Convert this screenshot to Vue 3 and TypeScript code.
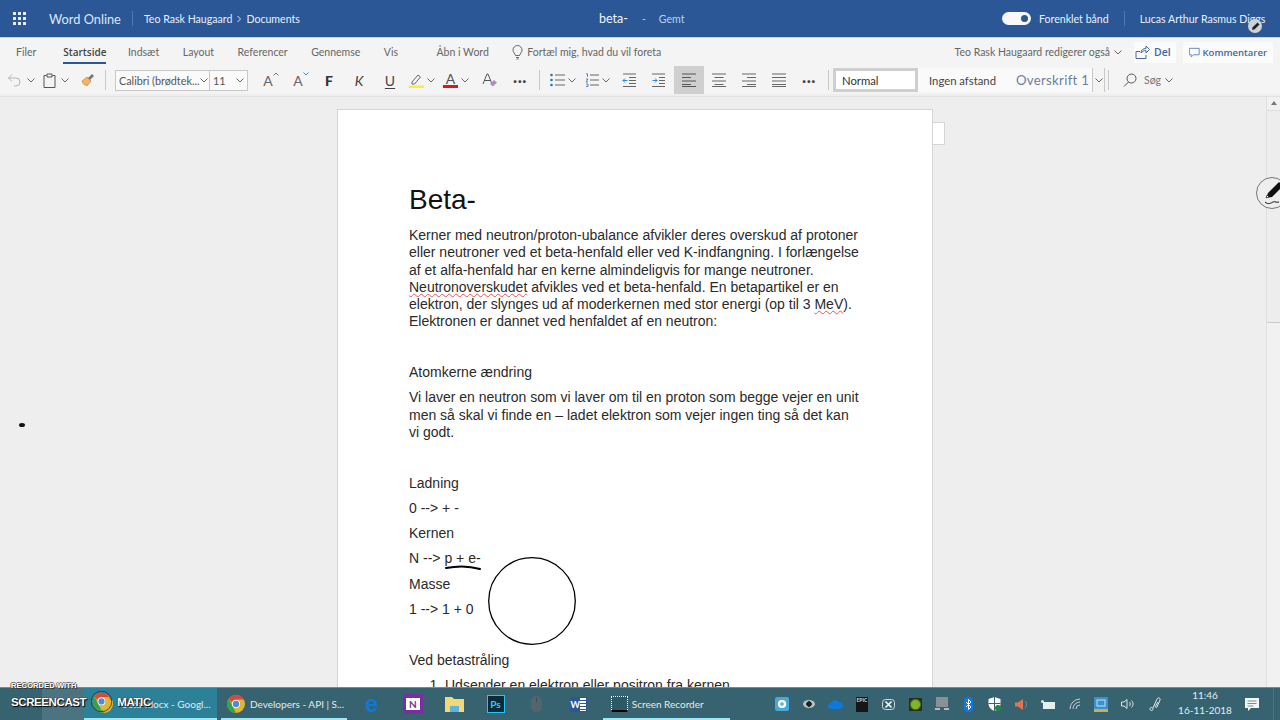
<template>
  <div class="app">
    <header class="titlebar">
      <div class="bar-left">
        <div class="waffle"><i v-for="n in 9" :key="n"></i></div>
        <span class="product">Word Online</span>
        <span class="bar-sep"></span>
        <span class="crumb">Teo Rask Haugaard</span>
        <svg class="crumb-arrow" width="6" height="8" viewBox="0 0 6 8"><path d="M1.5 1l3 3-3 3" fill="none" stroke="#dce6f4" stroke-width="1"/></svg>
        <span class="crumb">Documents</span>
      </div>
      <div class="doc-name">
        <span class="doc-title">beta-</span>
        <span class="doc-dash">-</span>
        <span class="doc-saved">Gemt</span>
      </div>
      <div class="toggle"><i></i></div>
      <span class="crumb toggle-label">Forenklet bånd</span>
      <span class="bar-sep right-sep"></span>
      <span class="crumb user">Lucas Arthur Rasmus Diggs</span>
    </header>

    <nav class="tabs">
      <span class="tab" v-for="tab in tabs" :key="tab" :class="{ active: tab === 'Startside', filer: tab === 'Filer' }">{{ tab }}</span>
      <span class="tab open-word">Åbn i Word</span>
      <svg class="bulb" width="11" height="15" viewBox="0 0 11 15"><path d="M3.500 10.500C3 8.500 1 7.500 1 5a4.500 4.500 0 0 1 9 0c0 2.500-2 3.500-2.500 5.500zM4 12.500h3M4.500 14h2" fill="none" stroke="#666" stroke-width="1"/></svg>
      <span class="tab tell">Fortæl mig, hvad du vil foreta</span>
      <span class="also">Teo Rask Haugaard redigerer også</span>
      <svg class="chev also-chev" width="8" height="5" viewBox="0 0 8 5"><path d="M.5.5l3.500 3.500 3.500-3.500" /></svg>
      <span class="pill share">
        <svg width="15" height="14" viewBox="0 0 15 14"><path d="M5 6.500H1v7h10V10M6 8c0-3 2-4.500 5-4.500V1l3.500 3.500L11 8V5.500C9 5.500 7.500 6 6 8z" fill="none" stroke="#44689f" stroke-width="1"/></svg>
        Del
      </span>
      <span class="pill comments">
        <svg width="14" height="13" viewBox="0 0 14 13"><path d="M.5 1h13v8.500H6L3 12.300V9.500H.5z" fill="none" stroke="#44689f" stroke-width="1"/></svg>
        Kommentarer
      </span>
    </nav>

    <div class="toolbar">
      <button class="tool split first">
        <svg width="15" height="14" viewBox="0 0 15 14"><path d="M5 1.500L1.500 5 5 8.500M1.500 5H9a4 4 0 0 1 0 8H7" fill="none" stroke="#b5b5b5" stroke-width="1"/></svg>
        <svg class="chev" width="8" height="5" viewBox="0 0 8 5"><path d="M.5.5l3.500 3.500 3.500-3.500" /></svg>
      </button>
      <button class="tool split clip">
        <svg width="13" height="15" viewBox="0 0 13 15"><path d="M3.500 2.500H1v12h11v-12H9.500M4 1h5v3H4z" fill="none" stroke="#555" stroke-width="1"/></svg>
        <svg class="chev" width="8" height="5" viewBox="0 0 8 5"><path d="M.5.5l3.500 3.500 3.500-3.500" /></svg>
      </button>
      <button class="tool painter">
        <svg width="14" height="14" viewBox="0 0 14 14"><path d="M1 8l5-4 4 4-4 5c-1-1-1.500-1-3-1.500C2 10.500 1.500 9.500 1 8z" fill="#f0b56c" stroke="#d58a32" stroke-width=".8"/><path d="M7 5l4-4 2 2-4 4z" fill="#777"/></svg>
      </button>
      <span class="sep sep-a"></span>

      <div class="font-box">
        <span class="font-name">Calibri (brødtek...</span>
        <svg class="chev" width="8" height="5" viewBox="0 0 8 5"><path d="M.5.5l3.500 3.500 3.500-3.500" /></svg>
      </div>
      <div class="font-box size-box">
        <span class="font-name">11</span>
        <svg class="chev" width="8" height="5" viewBox="0 0 8 5"><path d="M.5.5l3.500 3.500 3.500-3.500" /></svg>
      </div>

      <button class="tool sizer"><span class="a">A</span><svg class="caret" width="6" height="4" viewBox="0 0 6 4"><path d="M.5 3.500L3 1l2.500 2.500" /></svg></button>
      <button class="tool sizer"><span class="a">A</span><svg class="caret" width="6" height="4" viewBox="0 0 6 4"><path d="M.5.5L3 3 5.500.5" stroke="#4a8bd0"/></svg></button>
      <button class="tool bold">F</button>
      <button class="tool italic">K</button>
      <button class="tool under">U</button>
      <button class="tool split wide">
        <svg width="15" height="15" viewBox="0 0 15 15"><path d="M3 9l6-7 2.500 2-6 7H3z" fill="none" stroke="#666"/><rect y="12.500" width="15" height="2.500" fill="#fcec3a"/></svg>
        <svg class="chev" width="8" height="5" viewBox="0 0 8 5"><path d="M.5.5l3.500 3.500 3.500-3.500" /></svg>
      </button>
      <button class="tool split wide">
        <span class="font-color">A</span>
        <svg class="chev" width="8" height="5" viewBox="0 0 8 5"><path d="M.5.5l3.500 3.500 3.500-3.500" /></svg>
      </button>
      <button class="tool clear">
        <svg width="16" height="15" viewBox="0 0 16 15"><path d="M1 11L5 1h1l4 10M2.500 7.500h6" fill="none" stroke="#555"/><path d="M8 11l4-4 3 2.500-4 4z" fill="#b58ac9"/></svg>
      </button>
      <button class="tool dots">···</button>
      <span class="sep sep-b"></span>

      <button class="tool split list">
        <svg width="15" height="14" viewBox="0 0 15 14"><g fill="#2a6fb5"><circle cx="1.500" cy="2" r="1.300"/><circle cx="1.500" cy="7" r="1.300"/><circle cx="1.500" cy="12" r="1.300"/></g><path d="M5 2h10M5 7h10M5 12h10" stroke="#666"/></svg>
        <svg class="chev" width="8" height="5" viewBox="0 0 8 5"><path d="M.5.5l3.500 3.500 3.500-3.500" /></svg>
      </button>
      <button class="tool split list">
        <svg width="14" height="14" viewBox="0 0 14 14"><path d="M1 .8h1.500v3M1 6h2L1 9h2M1 11h2v2.500H1" fill="none" stroke="#2a6fb5" stroke-width=".8"/><path d="M5 2h9M5 7h9M5 12h9" stroke="#666"/></svg>
        <svg class="chev" width="8" height="5" viewBox="0 0 8 5"><path d="M.5.5l3.500 3.500 3.500-3.500" /></svg>
      </button>
      <button class="tool">
        <svg width="14" height="14" viewBox="0 0 14 14"><path d="M1 1h13M7 4.500h7M7 7.500h7M7 10.500h7M1 13.500h13" stroke="#666"/><path d="M5.500 7.500H.8M3 5.500l-2 2 2 2" fill="none" stroke="#2a8ad4"/></svg>
      </button>
      <button class="tool">
        <svg width="14" height="14" viewBox="0 0 14 14"><path d="M0 1h13M7 4.500h6M7 7.500h6M7 10.500h6M0 13.500h13" stroke="#666"/><path d="M.5 7.500h4.700M3 5.500l2 2-2 2" fill="none" stroke="#2a8ad4"/></svg>
      </button>
      <button class="tool active-align">
        <svg width="14" height="14" viewBox="0 0 14 14"><path d="M0 1h14M0 4.500h9M0 8h14M0 11.500h9M0 13.500h14" stroke="#555"/></svg>
      </button>
      <button class="tool">
        <svg width="14" height="14" viewBox="0 0 14 14"><path d="M0 1h14M2.500 4.500h9M0 8h14M2.500 11.500h9M0 13.500h14" stroke="#666"/></svg>
      </button>
      <button class="tool">
        <svg width="14" height="14" viewBox="0 0 14 14"><path d="M0 1h14M5 4.500h9M0 8h14M5 11.500h9M0 13.500h14" stroke="#666"/></svg>
      </button>
      <button class="tool">
        <svg width="14" height="14" viewBox="0 0 14 14"><path d="M0 1h14M0 4.500h14M0 8h14M0 11.500h14M0 13.500h14" stroke="#666"/></svg>
      </button>
      <button class="tool dots">···</button>
      <span class="sep sep-c"></span>

      <div class="gallery">
        <span class="style-normal">Normal</span>
        <span class="style-tight">Ingen afstand</span>
        <span class="style-head">Overskrift 1</span>
        <span class="gallery-more">
          <svg class="chev" width="8" height="5" viewBox="0 0 8 5"><path d="M.5.5l3.500 3.500 3.500-3.500" /></svg>
        </span>
      </div>
      <span class="sep sep-d"></span>
      <svg class="search-icon" width="14" height="14" viewBox="0 0 14 14"><circle cx="8.500" cy="5.500" r="4.500" fill="none" stroke="#555"/><path d="M5.500 9L1 13.500" stroke="#555"/></svg>
      <span class="search-label">Søg</span>
      <svg class="chev" width="8" height="5" viewBox="0 0 8 5"><path d="M.5.5l3.500 3.500 3.500-3.500" /></svg>
    </div>

    <main class="workspace">
      <div class="canvas">
        <article class="page">
          <h1>Beta-</h1>
          <p>Kerner med neutron/proton-ubalance afvikler deres overskud af protoner eller neutroner ved et beta-henfald eller ved K-indfangning. I forlængelse af et alfa-henfald har en kerne almindeligvis for mange neutroner. <span class="typo">Neutronoverskudet</span> afvikles ved et beta-henfald. En betapartikel er en elektron, der slynges ud af moderkernen med stor energi (op til 3 <span class="typo">MeV</span>). Elektronen er dannet ved henfaldet af en neutron:</p>
          <p class="blank"></p>
          <p>Atomkerne ændring</p>
          <p>Vi laver en neutron som vi laver om til en proton som begge vejer en unit men så skal vi finde en – ladet elektron som vejer ingen ting så det kan vi godt.</p>
          <p class="blank"></p>
          <p>Ladning</p>
          <p>0 --&gt; + -</p>
          <p>Kernen</p>
          <p>N --&gt; p + e-</p>
          <p>Masse</p>
          <p>1 --&gt; 1 + 0</p>
          <p class="blank"></p>
          <p>Ved betastråling</p>
          <ol><li>Udsender en elektron eller positron fra kernen</li></ol>

          <svg class="ink" width="140" height="100" viewBox="0 0 140 100">
            <path d="M1 11c10-2 24-2 34 1" fill="none" stroke="#000" stroke-width="2" stroke-linecap="round"/>
            <circle cx="87" cy="44" r="43.300" fill="none" stroke="#000" stroke-width="1.300"/>
          </svg>
        </article>
        <span class="comment-tab"></span>
      </div>
      <aside class="scrollbar">
        <span class="scroll-up"></span>
        <span class="scroll-thumb"></span>
      </aside>
      <span class="ink-dot"></span>
      <span class="pen-tool">
        <svg width="30" height="30" viewBox="0 0 30 30"><path d="M9 20l2-5L22 4l4 4-11 11z" fill="#111"/><path d="M9 20l3-1-2-2z" fill="#fff" stroke="#111" stroke-width=".6"/><path d="M8 24c3 3 6 1 8 0s4 1 6 0" fill="none" stroke="#111"/></svg>
      </span>
    </main>

    <footer class="taskbar">
      <span class="win-slot"></span>
      <span class="skype-slot"></span>
      <div class="task open lit">
        <svg class="chrome" width="18" height="18" viewBox="0 0 18 18"><use href="#chrome-mark"/></svg>
        <span>beta-.docx - Googl...</span>
      </div>
      <div class="task open second">
        <svg class="chrome" width="18" height="18" viewBox="0 0 18 18">
          <g id="chrome-mark">
            <circle cx="9" cy="9" r="9" fill="#e3b52c"/>
            <path d="M9 0a9 9 0 0 1 7.800 4.500H9a4.500 4.500 0 0 0-4.200 3L1.700 3.700A9 9 0 0 1 9 0z" fill="#d9483b"/>
            <path d="M1.700 3.700L5.500 11 9 18A9 9 0 0 1 1.700 3.700z" fill="#35a24f"/>
            <circle cx="9" cy="9" r="4" fill="#fff"/>
            <circle cx="9" cy="9" r="3.200" fill="#4a8be8"/>
          </g>
        </svg>
        <span>Developers - API | S...</span>
      </div>
      <div class="pins">
        <span class="pin edge">e</span>
        <span class="pin onenote"><b>N</b></span>
        <svg width="19" height="16" viewBox="0 0 19 16"><path d="M0 1h7l2 2h10v13H0z" fill="#f6d776"/><rect x="5" y="10" width="9" height="6" fill="#5cb5dc"/></svg>
        <span class="pin ps">Ps</span>
        <svg width="11" height="16" viewBox="0 0 11 16"><rect width="11" height="16" rx="5" fill="#52656b"/><path d="M5.500 1v5" stroke="#37545d"/></svg>
        <span class="pin word"><b>W</b><i></i></span>
      </div>
      <div class="task open recorder">
        <span class="marquee"></span>
        <span>Screen Recorder</span>
      </div>
      <div class="tray">
        <span class="t-disc"></span>
        <span class="t-eye"></span>
        <svg width="15" height="9" viewBox="0 0 15 9"><path d="M3 9a3 3 0 0 1 0-6 4.500 4.500 0 0 1 8-1 3.500 3.500 0 0 1 1 7z" fill="#0f78d4"/></svg>
        <span class="t-epic">EPIC</span>
        <svg width="13" height="11" viewBox="0 0 13 11"><rect x=".5" y=".5" width="12" height="10" rx="3" fill="none" stroke="#cfd8da"/><path d="M3.500 2.500l6 6M9.500 2.500l-6 6" stroke="#fff" stroke-width="1.500"/></svg>
        <span class="t-nvidia"></span>
        <svg width="14" height="14" viewBox="0 0 14 14"><rect x="1" y="0" width="12" height="10" fill="#8b8f98"/><path d="M0 12h5M9 12h5" stroke="#ddd" stroke-width="1.500"/></svg>
        <span class="t-bt">
          <svg width="7" height="11" viewBox="0 0 7 11"><path d="M1 3l5 5-2.500 2.500v-10L6 3 1 8" fill="none" stroke="#fff"/></svg>
        </span>
        <svg width="13" height="14" viewBox="0 0 13 14"><path d="M6.500 0l6 2v5c0 3-3 6-6 7-3-1-6-4-6-7V2z" fill="#fff"/><path d="M6.500 0v14M.5 6.500h12" stroke="#37626f"/><circle cx="10" cy="11" r="3" fill="#1f8a3b"/></svg>
        <svg width="13" height="13" viewBox="0 0 13 13"><path d="M0 4.500h3L8 1v11L3 8.500H0z" fill="#e0764f"/><path d="M10 3c2 2 2 5 0 7" fill="none" stroke="#7f9097"/></svg>
        <svg width="14" height="9" viewBox="0 0 14 9"><rect x="2" y="2" width="12" height="7" fill="#e8eeee"/><circle cx="1.500" cy="1.500" r="1.500" fill="#dfe8e8"/></svg>
        <svg width="12" height="12" viewBox="0 0 12 12"><path d="M1 11a10 10 0 0 1 10-10M4 11a7 7 0 0 1 7-7M7 11a4 4 0 0 1 4-4" fill="none" stroke="#c5d0d3"/></svg>
        <svg width="14" height="15" viewBox="0 0 14 15"><rect width="14" height="15" rx="1" fill="#3f8fc9"/><rect x="3" y="3" width="8" height="6" fill="none" stroke="#bfe3f5"/><path d="M0 12h14v3H0z" fill="#c9b04a"/></svg>
        <svg width="14" height="12" viewBox="0 0 14 12"><path d="M.5 4h2.500L6 1.500v9L3 8H.5zM8.500 4c1 1 1 3 0 4M10.500 2.500c2 2 2 5 0 7" fill="none" stroke="#dfe7e8"/></svg>
        <svg class="t-pen" width="14" height="14" viewBox="0 0 14 14"><path d="M1 12c0-2 3-2 3 0s-3 2-3 0zM4 11l4-9c1-2 4-1 3 1l-3 7c-1 1-2 0-1.500-1L9 5" fill="none" stroke="#e3e9ea"/></svg>
      </div>
      <div class="clock"><span>11:46</span><span>16-11-2018</span></div>
      <svg class="notify" width="14" height="13" viewBox="0 0 14 13"><path d="M0 0h14v10H6l-3 3v-3H0z" fill="#f4f6f6"/><path d="M2.500 3h9M2.500 5.500h9M2.500 8h6" stroke="#7a8d92"/></svg>
      <span class="show-desktop"></span>
    </footer>

    <div class="watermark">
      <span class="wm-top">RECORDED WITH</span>
      <div class="wm-main">
        <span>SCREENCAST</span>
        <svg width="21" height="21" viewBox="0 0 18 18"><circle cx="9" cy="9" r="8.800" fill="none" stroke="#1b3b47" stroke-width=".7"/><use href="#chrome-mark" transform="translate(1.500 1.500) scale(.83)"/></svg>
        <span>MATIC</span>
      </div>
    </div>

    <span class="cursor">
      <svg width="11" height="11" viewBox="0 0 11 11"><path d="M2 9l.7-2.700L7.500 1.500 9.500 3.500 4.700 8.300z" fill="#222"/></svg>
    </span>
  </div>
</template>

<script setup lang="ts">
const tabs: string[] = ['Filer', 'Startside', 'Indsæt', 'Layout', 'Referencer', 'Gennemse', 'Vis']
</script>

<style>
html,
body {
  margin: 0;
  overflow: hidden;
}
</style>

<style scoped>
.app {
  position: relative;
  display: flex;
  flex-direction: column;
  width: 1280px;
  height: 720px;
  overflow: hidden;
  background: #eeeeee;
  font-family: Lato, "Open Sans", sans-serif;
  color: #444;
}

/* title bar */
.titlebar {
  display: flex;
  align-items: center;
  flex: 0 0 37px;
  padding-left: 13px;
  background: #2b5797;
  color: #fff;
  font-size: 10.600px;
}
.bar-left {
  display: flex;
  align-items: center;
  flex: 0 0 586px;
}
.waffle {
  display: grid;
  grid-template-columns: repeat(3, 3px);
  gap: 2px;
  width: 13px;
  margin-right: 23px;
}
.waffle i {
  width: 3px;
  height: 3px;
  background: #e9eff8;
}
.product {
  font-size: 12.800px;
  color: #dbe7f7;
}
.bar-sep {
  width: 1px;
  height: 15px;
  margin: 0 11px;
  background: #5277ad;
}
.crumb {
  color: #eaf0f9;
  white-space: nowrap;
}
.crumb-arrow {
  margin: 0 4px;
}
.doc-name {
  display: flex;
  align-items: center;
  flex: 0 0 403px;
}
.doc-title {
  font-size: 12.500px;
  color: #f1f5fb;
}
.doc-dash {
  margin: 0 13px 0 14px;
  color: #b9cde9;
}
.doc-saved {
  color: #b9d2f0;
}
.toggle {
  display: flex;
  align-items: center;
  justify-content: flex-end;
  width: 29px;
  height: 13px;
  padding-right: 3px;
  box-sizing: border-box;
  border-radius: 7px;
  background: #f6f8fb;
}
.toggle i {
  width: 7px;
  height: 7px;
  border-radius: 50%;
  background: #2b5797;
}
.toggle-label {
  margin-left: 8px;
}
.right-sep {
  margin: 0 15px 0 15px;
}

/* tabs */
.tabs {
  display: flex;
  align-items: center;
  flex: 0 0 29px;
  padding-left: 16px;
  border-top: 1px solid #c4d3e8;
  box-sizing: border-box;
  background: #f4f4f4;
  font-size: 10.500px;
  color: #666;
}
.tab {
  position: relative;
  margin-right: 23.500px;
  white-space: nowrap;
}
.tab.filer {
  margin-right: 27px;
}
.tab.active {
  margin-right: 21.500px;
  color: #444;
  font-family: "Open Sans", sans-serif;
  font-size: 10px;
  font-weight: 600;
}
.tab.active::after {
  content: "";
  position: absolute;
  left: 0;
  right: 0;
  bottom: -5px;
  height: 2px;
  background: #2b5797;
}
.open-word {
  margin-left: 15px;
}
.bulb {
  margin-right: 4px;
}
.tell {
  margin-right: 0;
}
.also {
  margin-left: auto;
  white-space: nowrap;
}
.also-chev {
  margin: 0 12px 0 4px;
}
.pill {
  display: flex;
  align-items: center;
  gap: 3px;
  height: 21px;
  padding: 0 6px;
  box-sizing: border-box;
  background: #fbfbfb;
  color: #44689f;
  font-family: "Open Sans", sans-serif;
  font-weight: 600;
  font-size: 9.500px;
}
.share {
  gap: 4px;
  width: 42px;
  padding: 0 0 0 1px;
  font-size: 10.500px;
}
.comments {
  width: 90px;
  margin: 0 7px 0 7px;
}

/* ribbon toolbar */
.toolbar {
  display: flex;
  align-items: center;
  flex: 0 0 28px;
  margin-bottom: 2px;
  background: #f4f4f4;
}
.tool {
  display: flex;
  align-items: center;
  justify-content: center;
  flex: 0 0 30px;
  height: 28px;
  padding: 0;
  border: 0;
  background: none;
  font-family: inherit;
  color: #444;
}
.chev {
  fill: none;
  stroke: #666;
  stroke-width: 1;
  flex: none;
}
.split {
  gap: 5px;
}
.first {
  flex: 0 0 33px;
  margin-left: 4px;
}
.clip {
  flex: 0 0 25px;
  margin-left: 6px;
}
.painter {
  flex: 0 0 14px;
  margin-left: 12px;
}
.sep {
  flex: none;
  width: 1px;
  height: 20px;
  background: #c8c8c8;
}
.sep-a {
  margin: 0 9px 0 10px;
}
.sep-b {
  margin: 0 6px 0 4px;
}
.sep-c {
  margin: 0 4px;
}
.sep-d {
  margin: 0 14px 0 3px;
}
.font-box {
  display: flex;
  align-items: center;
  justify-content: space-between;
  box-sizing: border-box;
  width: 95px;
  height: 21px;
  padding: 0 3px;
  border: 1px solid #c8c8c8;
  background: #fafafa;
  font-size: 10.800px;
  color: #555;
  white-space: nowrap;
}
.size-box {
  width: 39px;
  margin-left: -1px;
  margin-right: 8px;
}
.sizer {
  align-items: flex-start;
  padding-top: 7px;
  box-sizing: border-box;
  color: #666;
}
.sizer .a {
  font-size: 14px;
  line-height: 15px;
}
.caret {
  fill: none;
  stroke: #777;
  margin-top: -1px;
}
.bold {
  margin-left: -2px;
  font-weight: 900;
  font-size: 14px;
  color: #333;
}
.italic {
  font-style: italic;
  font-size: 14px;
}
.under {
  margin-left: 1px;
  font-size: 14px;
  text-decoration: underline;
  text-underline-offset: 2px;
}
.wide {
  flex: 0 0 34px;
  gap: 3px;
}
.font-color {
  display: block;
  width: 15px;
  height: 13px;
  border-bottom: 3px solid #e3131b;
  box-sizing: content-box;
  font-size: 14px;
  line-height: 14px;
  text-align: center;
  color: #555;
}
.clear {
  margin-left: 2px;
}
.dots {
  font-size: 15px;
  font-weight: 700;
  letter-spacing: 0.5px;
  color: #444;
}
.list {
  flex: 0 0 34px;
  gap: 3px;
}
.active-align {
  background: #cfcfcf;
}
.gallery {
  display: flex;
  align-items: center;
  flex: 0 0 272px;
  height: 24px;
  box-sizing: border-box;
  background: #fafafa;
  color: #444;
  white-space: nowrap;
}
.style-normal {
  display: flex;
  align-items: center;
  flex: 0 0 85px;
  box-sizing: border-box;
  height: 24px;
  padding-left: 6px;
  border: 3px solid #cfcfcf;
  background: #fff;
  color: #333;
  font-size: 11.300px;
}
.style-tight {
  margin-left: 11px;
  font-size: 11.300px;
}
.style-head {
  margin-left: 20px;
  font-size: 13.200px;
  letter-spacing: 0.3px;
  color: #6d7f9e;
}
.gallery-more {
  display: flex;
  align-items: center;
  justify-content: center;
  margin-left: auto;
  width: 11px;
  height: 24px;
  border-left: 1px solid #c8c8c8;
  border-right: 1px solid #c8c8c8;
  background: #f4f4f4;
}
.search-icon {
  margin-right: 7px;
  flex: none;
}
.search-label {
  margin-right: 4px;
  font-size: 10.500px;
  color: #777;
}

/* document */
.workspace {
  position: relative;
  display: flex;
  flex: 1;
  min-height: 0;
  overflow: hidden;
  border-top: 1px solid #e2e2e2;
  background: #eeeeee;
}
.canvas {
  position: relative;
  flex: 1;
  padding: 13px 0 0 337px;
}
.page {
  position: relative;
  box-sizing: border-box;
  width: 596px;
  height: 640px;
  padding: 71px 71px 0;
  border: 1px solid #d5d5d5;
  border-width: 0 1px;
  box-shadow: 0 -1px 0 #d5d5d5;
  background: #fff;
  font-family: "Liberation Sans", Arial, sans-serif;
  font-size: 14px;
  line-height: 17.300px;
  color: #2a2a2a;
}
h1 {
  margin: 0 0 8px;
  font-size: 28px;
  font-weight: 400;
  line-height: 38px;
  color: #111;
}
p {
  margin: 0 0 8px;
}
.blank {
  height: 17.300px;
}
.typo {
  text-decoration: underline wavy #e0574f 1px;
  text-underline-offset: 1px;
}
ol {
  margin: 0;
  padding-left: 36px;
}
.ink {
  position: absolute;
  left: 107px;
  top: 447px;
}
.comment-tab {
  position: absolute;
  left: 933px;
  top: 25px;
  width: 12px;
  height: 23px;
  box-sizing: border-box;
  border: 1px solid #d5d5d5;
  border-left: 0;
  background: #fff;
}
.scrollbar {
  position: relative;
  flex: 0 0 13px;
  border-left: 1px solid #e0e0e0;
  background: #f1f1f1;
}
.scroll-up {
  display: block;
  height: 13px;
}
.scroll-up::before {
  content: "";
  display: block;
  width: 0;
  margin: 0 auto;
  transform: translateY(4px);
  border: 3px solid transparent;
  border-bottom: 4px solid #777;
  border-top: 0;
}
.scroll-thumb {
  display: block;
  height: 211px;
  border-top: 1px solid #dcdcdc;
  border-bottom: 1px solid #c9c9c9;
  background: #ededed;
}
.ink-dot {
  position: absolute;
  left: 19px;
  top: 326px;
  width: 6px;
  height: 4px;
  border-radius: 50%;
  background: #111;
}
.pen-tool {
  position: absolute;
  left: 1256px;
  top: 80px;
  display: flex;
  align-items: center;
  justify-content: flex-start;
  width: 32px;
  height: 32px;
  box-sizing: border-box;
  border: 1px solid #777;
  border-radius: 50%;
  background: #eee;
}

/* taskbar */
.taskbar {
  position: relative;
  display: flex;
  align-items: center;
  flex: 0 0 33px;
  height: 33px;
  border-top: 1px solid #6c8c96;
  box-sizing: border-box;
  background: #37626f;
  color: #e3ecef;
  font-size: 10px;
}
.win-slot {
  flex: 0 0 42px;
  height: 100%;
}
.skype-slot {
  flex: 0 0 42px;
  height: 100%;
  background: #4b7480;
}
.task {
  position: relative;
  display: flex;
  align-items: center;
  gap: 5px;
  height: 100%;
  min-width: 0;
  white-space: nowrap;
}
.task.open::after {
  content: "";
  position: absolute;
  left: 0;
  right: 0;
  bottom: 0;
  height: 2px;
  background: #9be8f6;
}
.lit {
  flex: 0 0 133px;
  box-sizing: border-box;
  padding-left: 11px;
  background: #2c8098;
}
.lit span {
  margin-left: 4px;
}
.second {
  flex: 0 0 126px;
  margin-left: 4px;
  box-sizing: border-box;
  padding-left: 6px;
}
.pins {
  display: grid;
  grid-auto-flow: column;
  grid-auto-columns: 41.300px;
  align-items: center;
  justify-items: center;
  margin-left: 4px;
}
.pin {
  display: flex;
  align-items: center;
  justify-content: center;
  flex: none;
}
.edge {
  width: 18px;
  font: 700 24px/20px "Liberation Sans", sans-serif;
  color: #0f78d4;
}
.onenote {
  width: 20px;
  height: 20px;
  background: #7a2f9e;
  color: #fff;
  font-size: 10px;
}
.onenote b {
  display: block;
  padding: 0 3px;
  background: #fff;
  color: #7a2f9e;
  line-height: 12px;
}
.ps {
  width: 18px;
  height: 18px;
  border: 1px solid #25c4f5;
  box-sizing: border-box;
  background: #082c3c;
  color: #4ac4f0;
  font-size: 10px;
  font-weight: 700;
}
.word {
  width: 17px;
  height: 15px;
  color: #fff;
  font-size: 9px;
  background: #2b5797;
}
.word i {
  width: 6px;
  height: 13px;
  background: repeating-linear-gradient(#fff 0 2px, #2b5797 2px 3px);
}
.recorder {
  flex: 0 0 127px;
  box-sizing: border-box;
  margin-left: 4px;
  padding-left: 8px;
  gap: 4px;
}
.marquee {
  width: 15px;
  height: 13px;
  border: 1px dotted #fff;
  border-bottom: 2px solid #000;
  background: #2d5866;
}
.tray {
  display: grid;
  grid-auto-flow: column;
  grid-auto-columns: 26.600px;
  align-items: center;
  justify-items: center;
  margin-left: 39px;
}
.t-pen {
  margin-left: 4px;
}
.t-disc {
  width: 14px;
  height: 14px;
  border-radius: 2px;
  background: radial-gradient(circle, #5ab8de 0 1.500px, #fff 2px 4px, #4aa8d4 4.500px);
}
.t-eye {
  width: 12px;
  height: 8px;
  border-radius: 50%;
  background: radial-gradient(circle, #222 0 2.500px, #b9c3c5 3px);
}
.t-epic {
  display: flex;
  justify-content: center;
  width: 12px;
  height: 15px;
  background: #161616;
  color: #ddd;
  font-size: 5px;
  font-weight: 700;
}
.t-nvidia {
  width: 13px;
  height: 13px;
  background: radial-gradient(ellipse, #7fb528 0 4px, #24301c 6px);
}
.t-bt {
  display: flex;
  align-items: center;
  justify-content: center;
  width: 9px;
  height: 15px;
  border-radius: 4px;
  background: #0f78e4;
}
.clock {
  position: absolute;
  left: 1180px;
  top: 0;
  display: flex;
  flex-direction: column;
  align-items: center;
  width: 50px;
  font-size: 10px;
  line-height: 15px;
  white-space: nowrap;
}
.notify {
  position: absolute;
  left: 1245px;
  top: 10px;
}
.show-desktop {
  position: absolute;
  right: 6px;
  top: 0;
  width: 1px;
  height: 100%;
  background: #50747f;
}

/* overlays */
.watermark {
  position: absolute;
  left: 11px;
  top: 681px;
  color: #fff;
  font-family: "Liberation Sans", Arial, sans-serif;
  font-weight: 700;
}
.wm-top {
  display: block;
  font-size: 7.500px;
  line-height: 10px;
  letter-spacing: 0.1px;
  text-shadow: 1px 1px 0 #333, -1px 0 0 #666, 0 -1px 0 #666;
}
.wm-main {
  display: flex;
  align-items: center;
  gap: 5px;
  margin-top: 0;
  font-size: 11.500px;
  letter-spacing: -0.4px;
  text-shadow: 0 0 1px #000, 1px 1px 1px #000;
}
.cursor {
  position: absolute;
  left: 1248px;
  top: 19px;
  display: flex;
  align-items: center;
  justify-content: center;
  width: 14px;
  height: 14px;
  border-radius: 50%;
  background: #cfd2d4;
}
</style>
